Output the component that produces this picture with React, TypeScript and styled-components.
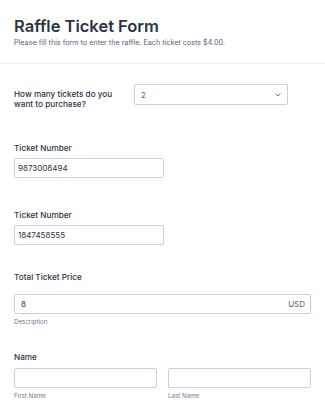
import React from "react";
import styled, { createGlobalStyle } from "styled-components";

const Global = createGlobalStyle`
  html, body { margin: 0; padding: 0; background: #ffffff; }
  body {
    font-family: Inter, "Noto Sans", "Liberation Sans", sans-serif;
    color: #2c3345;
    -webkit-font-smoothing: antialiased;
  }
  * { box-sizing: border-box; }
`;

const Page = styled.div`
  width: 325px;
  display: flex;
  flex-direction: column;
`;

const Header = styled.header`
  padding: 16px 14px 15px;
  border-bottom: 1px solid #eceef3;
  display: flex;
  flex-direction: column;
  gap: 2px;
`;

const Title = styled.h1`
  margin: 0;
  font-size: 16.5px;
  line-height: 20px;
  font-weight: 600;
  color: #2c3345;
`;

const Subtitle = styled.p`
  margin: 0;
  font-size: 7.2px;
  line-height: 10px;
  color: #57647e;
`;

const Body = styled.div`
  padding: 0 14px;
  display: flex;
  flex-direction: column;
`;

const Field = styled.div<{ $top: number }>`
  margin-top: ${(p) => p.$top}px;
  display: flex;
  flex-direction: column;
`;

const InlineField = styled.div`
  margin-top: 20px;
  display: grid;
  grid-template-columns: 120px 154px;
  align-items: start;
`;

const Label = styled.label<{ $gap?: number }>`
  display: block;
  font-size: 8.2px;
  line-height: 10px;
  font-weight: 500;
  color: #2c3345;
  margin-bottom: ${(p) => p.$gap ?? 5}px;
`;

const SideLabel = styled(Label)`
  padding-top: 6px;
  line-height: 9.5px;
  margin-bottom: 0;
`;

const Select = styled.div`
  height: 21px;
  border: 1px solid #c9cfdb;
  border-radius: 2px;
  display: flex;
  align-items: center;
  justify-content: space-between;
  padding: 0 6px 0 6px;
  font-size: 8px;
  color: #57647e;
`;

const Input = styled.div<{ $width?: number; $pad?: number }>`
  width: ${(p) => (p.$width ? `${p.$width}px` : "100%")};
  height: 20px;
  border: 1px solid #c9cfdb;
  border-radius: 2px;
  display: flex;
  align-items: center;
  justify-content: space-between;
  padding: 0 5px 0 ${(p) => p.$pad ?? 3}px;
  font-size: 8px;
  color: #2c3345;
`;

const Currency = styled.span`
  font-size: 8px;
  color: #57647e;
`;

const Sublabel = styled.span`
  display: block;
  margin-top: 3px;
  font-size: 6.2px;
  line-height: 10px;
  color: #6f7a91;
`;

const NameGrid = styled.div`
  display: grid;
  grid-template-columns: 143px 143px;
  column-gap: 11px;
`;

const NameCol = styled.div`
  display: flex;
  flex-direction: column;
`;

const Chevron = () => (
  <svg width="6" height="4" viewBox="0 0 6 4" fill="none">
    <path d="M0.8 0.8 L3 3 L5.2 0.8" stroke="#57647e" strokeWidth="0.9" strokeLinecap="round" strokeLinejoin="round" />
  </svg>
);

export default function App() {
  return (
    <Page>
      <Global />
      <Header>
        <Title>Raffle Ticket Form</Title>
        <Subtitle>Please fill this form to enter the raffle. Each ticket costs $4.00.</Subtitle>
      </Header>
      <Body>
        <InlineField>
          <SideLabel>
            How many tickets do you
            <br />
            want to purchase?
          </SideLabel>
          <Select>
            <span>2</span>
            <Chevron />
          </Select>
        </InlineField>

        <Field $top={34}>
          <Label>Ticket Number</Label>
          <Input $width={150}>9873008494</Input>
        </Field>

        <Field $top={32}>
          <Label>Ticket Number</Label>
          <Input $width={150}>1847458555</Input>
        </Field>

        <Field $top={27}>
          <Label $gap={12}>Total Ticket Price</Label>
          <Input $pad={6}>
            <span>8</span>
            <Currency>USD</Currency>
          </Input>
          <Sublabel>Description</Sublabel>
        </Field>

        <Field $top={25}>
          <Label $gap={6}>Name</Label>
          <NameGrid>
            <NameCol>
              <Input />
              <Sublabel>First Name</Sublabel>
            </NameCol>
            <NameCol>
              <Input />
              <Sublabel>Last Name</Sublabel>
            </NameCol>
          </NameGrid>
        </Field>
      </Body>
    </Page>
  );
}
